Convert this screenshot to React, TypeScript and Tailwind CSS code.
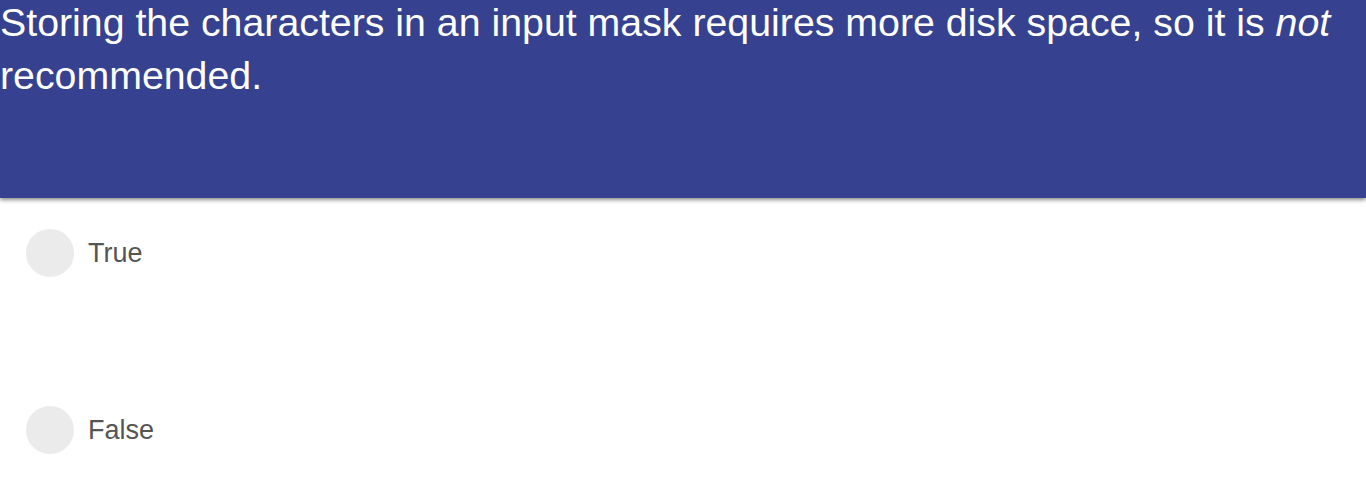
import React from "react";

export default function App() {
  return (
    <div className="w-[1366px] h-[497px] bg-white overflow-hidden" style={{ fontFamily: '"Liberation Sans", Arial, sans-serif' }}>
      <div className="h-[202px] bg-[#36418f] shadow-[0_2px_4px_rgba(0,0,0,0.45)] relative z-10 -mt-[4px]">
        <p className="text-white text-[39.3px] leading-[53px] m-0">
          Storing the characters in an input mask requires more disk space, so it is <em>not</em> recommended.
        </p>
      </div>
      <div className="flex flex-col pl-[26px] pt-[31px] gap-[129px]">
        <label className="flex items-center gap-[14px] h-[48px]">
          <span className="w-[48px] h-[48px] rounded-full bg-[#ebebeb] block" />
          <span className="text-[27px] text-[#555555]">True</span>
        </label>
        <label className="flex items-center gap-[14px] h-[48px]">
          <span className="w-[48px] h-[48px] rounded-full bg-[#ebebeb] block" />
          <span className="text-[27px] text-[#555555]">False</span>
        </label>
      </div>
    </div>
  );
}
